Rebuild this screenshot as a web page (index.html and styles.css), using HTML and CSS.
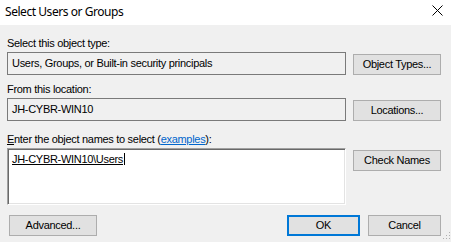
FILE: index.html
```html
<!DOCTYPE html>
<html>
<head>
<meta charset="utf-8">
<link rel="stylesheet" href="styles.css">
</head>
<body>
<div class="dialog">
  <div class="titlebar">
    <span class="title">Select Users or Groups</span>
    <svg class="close" width="11" height="11" viewBox="0 0 11 11"><path d="M0.5 0.5 L10.5 10.5 M10.5 0.5 L0.5 10.5" stroke="#000" stroke-width="1" fill="none"/></svg>
  </div>
  <div class="content">
    <div class="section">
      <div class="label">Select this object type:</div>
      <div class="row">
        <div class="field">Users, Groups, or Built-in security principals</div>
        <div class="btn side">Object Types...</div>
      </div>
    </div>
    <div class="section s2">
      <div class="label">From this location:</div>
      <div class="row">
        <div class="field">JH-CYBR-WIN10</div>
        <div class="btn side">Locations...</div>
      </div>
    </div>
    <div class="section s3">
      <div class="label"><u>E</u>nter the object names to select (<a class="link">examples</a>):</div>
      <div class="row">
        <div class="names"><span class="entry">JH-CYBR-WIN10\Users</span><span class="caret"></span></div>
        <div class="btn side">Check Names</div>
      </div>
    </div>
    <div class="footer">
      <div class="btn adv">Advanced...</div>
      <div class="btn ok">OK</div>
      <div class="btn cancel">Cancel</div>
    </div>
  </div>
  <svg class="grip" width="10" height="10" viewBox="0 0 10 10">
    <rect x="8" y="0" width="1" height="1" fill="#b0b0b0"/>
    <rect x="5" y="3" width="1" height="1" fill="#b0b0b0"/>
    <rect x="8" y="3" width="1" height="1" fill="#b0b0b0"/>
    <rect x="2" y="6" width="1" height="1" fill="#b0b0b0"/>
    <rect x="5" y="6" width="1" height="1" fill="#b0b0b0"/>
    <rect x="8" y="6" width="1" height="1" fill="#b0b0b0"/>
  </svg>
</div>
</body>
</html>
```

FILE: styles.css
```css
html, body {
  margin: 0;
  padding: 0;
}
body {
  width: 451px;
  height: 242px;
  overflow: hidden;
  font-family: "Liberation Sans", Arial, sans-serif;
  font-size: 11px;
  letter-spacing: -0.3px;
  color: #000;
}
.dialog {
  position: relative;
  width: 451px;
  height: 242px;
  background: #f0f0f0;
}
.titlebar {
  height: 25px;
  background: #fff;
  display: flex;
  align-items: center;
  justify-content: space-between;
  padding: 0 8px 0 5px;
  box-sizing: border-box;
}
.title {
  font-family: "Noto Sans", "Open Sans", sans-serif;
  font-size: 12px;
  letter-spacing: -0.45px;
  line-height: 16px;
  margin-top: -1px;
}
.close {
  display: block;
  margin-top: -5px;
}
.content {
  padding: 12px 0 0 7px;
}
.label {
  line-height: 13px;
  height: 13px;
  margin-bottom: 2px;
}
.row {
  display: flex;
  align-items: flex-start;
}
.field {
  width: 339px;
  height: 23px;
  box-sizing: border-box;
  border: 1px solid #7a7a7a;
  padding: 4px 0 0 4px;
  line-height: 13px;
}
.btn {
  height: 21px;
  box-sizing: border-box;
  background: #e1e1e1;
  border: 1px solid #adadad;
  display: flex;
  align-items: center;
  justify-content: center;
  line-height: 13px;
}
.side {
  width: 88px;
  margin: 2px 0 0 7px;
}
.s2 {
  margin-top: 8px;
}
.s3 {
  margin-top: 12px;
}
.link {
  color: #0066cc;
  text-decoration: underline;
}
.names {
  width: 339px;
  height: 57px;
  box-sizing: border-box;
  background: #fff;
  border: 1px solid;
  border-color: #a0a0a0 #ffffff #ffffff #a0a0a0;
  box-shadow: inset 1px 1px 0 #696969, inset -1px -1px 0 #e3e3e3;
  padding: 4px 0 0 4px;
  line-height: 13px;
  display: flex;
  align-items: flex-start;
}
.entry {
  text-decoration: underline;
}
.caret {
  display: inline-block;
  width: 1px;
  height: 12px;
  background: #000;
  margin-left: 1px;
}
.footer {
  display: flex;
  margin-top: 10px;
  padding-left: 2px;
  padding-right: 10px;
}
.adv {
  width: 88px;
}
.ok {
  width: 73px;
  margin-left: auto;
  border: 2px solid #0078d7;
}
.cancel {
  width: 73px;
  margin-left: 8px;
}
.grip {
  position: absolute;
  right: 0;
  bottom: 0;
}
```
